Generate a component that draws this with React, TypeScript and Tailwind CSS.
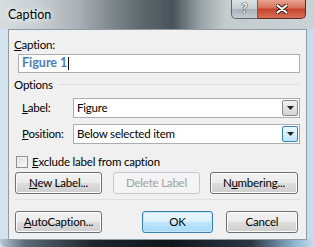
import React from 'react';

const font = { fontFamily: 'Lato, "Noto Sans", "Liberation Sans", sans-serif' };

function Btn({ children, disabled = false, primary = false, className = '' }: { children: React.ReactNode; disabled?: boolean; primary?: boolean; className?: string }) {
  return (
    <div
      className={`flex h-[22px] items-center justify-center rounded-[3px] border leading-none ${
        disabled
          ? 'border-[#c4c8cc] bg-[#f4f4f4] text-[#a0a0a0]'
          : primary
            ? 'border-[#3c7fb1] bg-[linear-gradient(#eaf6fd_0%,#d9f0fc_50%,#bee6fd_51%,#a7d9f5_100%)] text-black shadow-[inset_0_0_0_1px_#c4e5f6]'
            : 'border-[#707070] bg-[linear-gradient(#f2f2f2_0%,#ebebeb_50%,#dddddd_51%,#cfcfcf_100%)] text-black shadow-[inset_0_0_0_1px_#fcfcfc]'
      } ${className}`}
    >
      {children}
    </div>
  );
}

function Combo({ value, hot = false }: { value: string; hot?: boolean }) {
  return (
    <div className="flex h-[20px] w-[227px] items-center border border-[#abadb3] bg-white">
      <span className="flex-1 pl-[3px] leading-none">{value}</span>
      <div
        className={`mr-[1px] flex h-[16px] w-[16px] items-center justify-center rounded-[2px] border ${
          hot ? 'border-[#3c7fb1] bg-[linear-gradient(#eaf6fd,#bee6fd)]' : 'border-[#8a8a8a] bg-[linear-gradient(#f2f2f2,#d4d4d4)]'
        }`}
      >
        <svg width="7" height="4" viewBox="0 0 7 4">
          <path d="M0 0h7L3.5 4z" fill="#222" />
        </svg>
      </div>
    </div>
  );
}

export default function App() {
  return (
    <div style={font} className="relative h-[247px] w-[314px] overflow-hidden bg-[linear-gradient(90deg,#d6dcdf_0%,#c8cfd2_12%,#aab0b5_25%,#7d868a_36%,#5e686c_45%,#48525a_55%,#9aa4a8_64%,#c4cccd_72%,#c9d2d6_100%)] text-black">
      {/* title bar */}
      <div className="flex h-[29px] items-start">
        <span className="ml-[8px] mt-[8px] text-[12.5px] leading-[14px] text-black [text-shadow:0_0_8px_#fff,0_0_4px_#fff]">Caption</span>
        <div className="ml-auto mr-[8px] flex h-[19px]">
          <div className="flex w-[27px] items-center justify-center rounded-bl-[5px] border border-t-0 border-[#5b6770] bg-[linear-gradient(#dbe2e6_0%,#c4cdd2_50%,#a8b4ba_51%,#c3ccd0_100%)] text-[13px] font-bold text-white [text-shadow:0_0_1px_#333,0_0_1px_#333,0_0_1px_#333]">
            ?
          </div>
          <div className="flex w-[48px] items-center justify-center rounded-br-[5px] border border-l-0 border-t-0 border-[#5b2a20] bg-[linear-gradient(#e8a492_0%,#d56f57_45%,#c4422a_50%,#d8705a_100%)]">
            <svg width="12" height="10" viewBox="0 0 12 10">
              <path d="M1.5 1.5l9 7M10.5 1.5l-9 7" stroke="#3a1a14" strokeWidth="4" strokeLinecap="round" />
              <path d="M1.5 1.5l9 7M10.5 1.5l-9 7" stroke="#fff" strokeWidth="2.2" strokeLinecap="round" />
            </svg>
          </div>
        </div>
      </div>

      {/* side frames */}
      <div className="absolute bottom-0 left-0 top-[29px] w-[8px] bg-[#d4e2ee]" />
      <div className="absolute bottom-0 right-0 top-[29px] w-[8px] bg-[#c8dbea]" />
      <div className="absolute bottom-0 left-0 right-0 h-[8px] rounded-b-[6px] bg-[linear-gradient(90deg,#b9c9d6_0%,#5a6a76_8%,#1c252c_30%,#10171c_55%,#2a3844_80%,#8fb6d4_94%,#c8dbea_100%)]" />

      {/* client area */}
      <div className="relative ml-[8px] mr-[7px] h-[211px] border border-[#8e9ba5] bg-[#f0f0f0] text-[11.5px] tracking-[-0.2px]">
        <div className="ml-[5px] mt-[7px] h-[16px] leading-[16px]">
          <span className="underline underline-offset-1">C</span>aption:
        </div>
        <div className="ml-[9px] mt-[1px] flex h-[19px] w-[282px] items-center border border-[#abadb3] bg-white pl-[3px]">
          <span className="text-[12.5px] font-bold leading-none tracking-normal text-[#4a7ebb]">Figure 1</span>
          <span className="ml-[1px] h-[13px] w-[1px] bg-black" />
        </div>

        <div className="ml-[5px] mt-[4px] flex h-[15px] items-center">
          <span className="leading-[15px]">Options</span>
          <span className="ml-[6px] mr-[7px] h-[1px] flex-1 bg-[#d5dfe5]" />
        </div>

        <div className="ml-[13px] mt-[6px] flex items-center">
          <span className="w-[51px]">
            <span className="underline underline-offset-1">L</span>abel:
          </span>
          <Combo value="Figure" />
        </div>
        <div className="ml-[13px] mt-[6px] flex items-center">
          <span className="w-[51px]">
            <span className="underline underline-offset-1">P</span>osition:
          </span>
          <Combo value="Below selected item" hot />
        </div>

        <div className="ml-[7px] mt-[11px] flex h-[13px] items-center">
          <span className="h-[12px] w-[12px] border border-[#8f8f8f] bg-[linear-gradient(135deg,#dcdcdc,#fbfbfb)] shadow-[inset_0_0_0_1px_#f4f4f4]" />
          <span className="ml-[4px] leading-[14px]">
            <span className="underline underline-offset-1">E</span>xclude label from caption
          </span>
        </div>

        <div className="ml-[6px] mt-[4px] flex">
          <Btn className="w-[87px]">
            <span>
              <span className="underline underline-offset-1">N</span>ew Label...
            </span>
          </Btn>
          <Btn disabled className="ml-[11px] w-[87px]">Delete Label</Btn>
          <Btn className="ml-[10px] w-[88px]">
            <span>
              N<span className="underline underline-offset-1">u</span>mbering...
            </span>
          </Btn>
        </div>

        <div className="mx-[6px] mt-[5px] h-[1px] bg-[#dfdfdf]" />

        <div className="ml-[6px] mt-[11px] flex">
          <Btn className="w-[87px]">
            <span>
              <span className="underline underline-offset-1">A</span>utoCaption...
            </span>
          </Btn>
          <Btn primary className="ml-[40px] w-[71px]">OK</Btn>
          <Btn className="ml-[13px] w-[72px]">Cancel</Btn>
        </div>
      </div>
    </div>
  );
}
